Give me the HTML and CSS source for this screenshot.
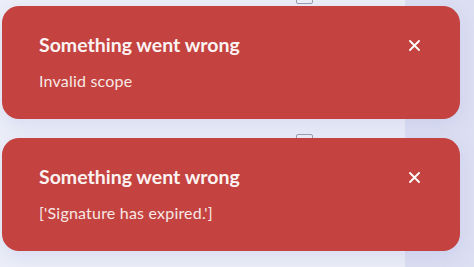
FILE: index.html
```html
<!DOCTYPE html>
<html lang="en">
<head>
    <meta charset="UTF-8">
    <meta name="viewport" content="width=device-width, initial-scale=1.0">
    <title>Toasts</title>
    <link rel="stylesheet" href="styles.css">
</head>
<body>

<div class="page">
    <span class="handle handle-top"></span>
    <span class="handle handle-middle"></span>

    <div class="toast-list">
        <div class="toast">
            <div class="toast-head">
                <div class="toast-title">Something went wrong</div>
                <button class="toast-close" aria-label="Close">
                    <svg width="11" height="11" viewBox="0 0 11 11">
                        <path d="M1 1 L10 10 M10 1 L1 10" stroke="#fff" stroke-width="1.8" stroke-linecap="round"/>
                    </svg>
                </button>
            </div>
            <div class="toast-text">Invalid scope</div>
        </div>

        <div class="toast">
            <div class="toast-head">
                <div class="toast-title">Something went wrong</div>
                <button class="toast-close" aria-label="Close">
                    <svg width="11" height="11" viewBox="0 0 11 11">
                        <path d="M1 1 L10 10 M10 1 L1 10" stroke="#fff" stroke-width="1.8" stroke-linecap="round"/>
                    </svg>
                </button>
            </div>
            <div class="toast-text">['Signature has expired.']</div>
        </div>
    </div>
</div>

</body>
</html>
```

FILE: styles.css
```css
body {
    margin: 0;
    width: 474px;
    height: 267px;
    overflow: hidden;
    background: linear-gradient(to right, #eceef8 405px, #dcdff2 405px);
    font-family: "Lato", "Open Sans", sans-serif;
}

.page {
    position: relative;
    height: 100%;
}

.handle {
    position: absolute;
    left: 296px;
    width: 15px;
    height: 6px;
    border: 1px solid #9a9cae;
    border-radius: 2px;
    background: #eef0f8;
}

.handle-top {
    top: -4px;
}

.handle-middle {
    top: 134px;
}

.toast-list {
    position: relative;
    display: flex;
    flex-direction: column;
    gap: 19px;
    padding: 6px 0 0 2px;
}

.toast {
    width: 458px;
    height: 113px;
    box-sizing: border-box;
    padding: 27px 40px 0 37px;
    background: #c4423f;
    border-radius: 17px;
    box-shadow: 0 6px 18px rgba(130, 140, 210, 0.18);
    color: #fff;
}

.toast-head {
    display: flex;
    justify-content: space-between;
    align-items: center;
}

.toast-title {
    font-size: 19.5px;
    line-height: 24px;
    font-weight: bold;
    color: #fbf3f2;
}

.toast-close {
    border: none;
    background: none;
    padding: 0;
    width: 11px;
    height: 11px;
    display: flex;
    cursor: pointer;
}

.toast-text {
    margin-top: 14px;
    font-size: 16px;
    line-height: 20px;
    color: #f7e8e6;
    letter-spacing: 0.2px;
}
```
